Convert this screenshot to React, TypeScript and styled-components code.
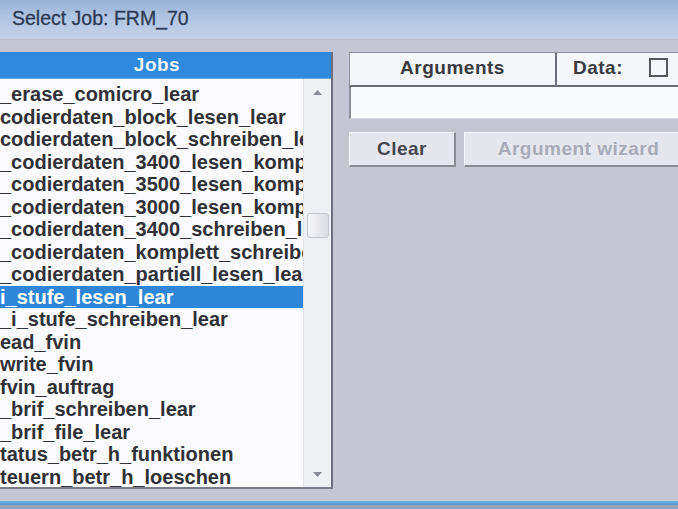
import React from "react";
import styled, { createGlobalStyle } from "styled-components";

const jobs = [
  "_erase_comicro_lear",
  "codierdaten_block_lesen_lear",
  "codierdaten_block_schreiben_lear",
  "_codierdaten_3400_lesen_komplett",
  "_codierdaten_3500_lesen_komplett",
  "_codierdaten_3000_lesen_komplett",
  "_codierdaten_3400_schreiben_lear",
  "_codierdaten_komplett_schreiben",
  "_codierdaten_partiell_lesen_lear",
  "i_stufe_lesen_lear",
  "_i_stufe_schreiben_lear",
  "ead_fvin",
  "write_fvin",
  "fvin_auftrag",
  "_brif_schreiben_lear",
  "_brif_file_lear",
  "tatus_betr_h_funktionen",
  "teuern_betr_h_loeschen",
];

const SELECTED = 9;

const GlobalStyle = createGlobalStyle`
  html, body {
    margin: 0;
    padding: 0;
    overflow: hidden;
    background: #c5c6d2;
  }
`;

const Window = styled.div`
  width: 678px;
  height: 509px;
  overflow: hidden;
  display: flex;
  flex-direction: column;
  background: #c5c6d3;
  font-family: "Liberation Sans", Arial, sans-serif;
`;

const TitleBar = styled.div`
  height: 40px;
  flex: none;
  display: flex;
  align-items: center;
  padding-left: 12px;
  padding-bottom: 2px;
  box-sizing: border-box;
  background: linear-gradient(#98b2d4 0%, #b5c9e4 55%, #c2d1e6 100%);
  color: #2c3b55;
  font-size: 19.5px;
  -webkit-text-stroke: 0.3px #2c3b55;
  border-bottom: 1px solid #bcbfcc;
`;

const Body = styled.div`
  flex: 1;
  display: flex;
  gap: 16px;
  padding-top: 12px;
  margin-left: -17px;
  min-height: 0;
`;

const JobsPanel = styled.div`
  width: 350px;
  height: 437px;
  flex: none;
  display: flex;
  flex-direction: column;
  background: #ffffff;
  border-right: 2px solid #6c6f80;
  border-bottom: 2px solid #7a7d8c;
  box-sizing: border-box;
`;

const Header = styled.div`
  height: 26px;
  flex: none;
  display: flex;
  align-items: center;
  justify-content: center;
  background: #2f89dd;
  border-bottom: 1px solid #6fa6dc;
  color: #eef4fc;
  font-weight: bold;
  font-size: 19px;
  letter-spacing: 0.5px;
`;

const ListArea = styled.div`
  flex: 1;
  display: flex;
  min-height: 0;
`;

const List = styled.div`
  flex: 1;
  padding-top: 4px;
  padding-left: 17px;
  overflow: hidden;
  background: #fbfbfd;
`;

const Row = styled.div<{ $selected?: boolean }>`
  height: 22.5px;
  line-height: 22px;
  margin-left: -17px;
  padding-left: 17px;
  white-space: nowrap;
  overflow: hidden;
  font-size: 20px;
  font-weight: bold;
  color: ${(p) => (p.$selected ? "#ffffff" : "#303137")};
  background: ${(p) => (p.$selected ? "#2f86d8" : "transparent")};
`;

const ScrollBar = styled.div`
  width: 27px;
  flex: none;
  display: flex;
  flex-direction: column;
  align-items: center;
  background: #eff0f4;
  border-left: 1px solid #e2e3ea;
`;

const Arrow = styled.div<{ $down?: boolean }>`
  height: 26px;
  width: 100%;
  display: flex;
  align-items: center;
  justify-content: center;
  margin-top: ${(p) => (p.$down ? "auto" : "0")};
`;

const Thumb = styled.div`
  width: 22px;
  height: 25px;
  margin-top: 108px;
  border: 1px solid #c3c6d2;
  border-radius: 3px;
  background: linear-gradient(90deg, #f6f6f9, #dcdde5);
  box-sizing: border-box;
`;

const RightPanel = styled.div`
  width: 345px;
  flex: none;
  display: flex;
  flex-direction: column;
`;

const ArgHeader = styled.div`
  height: 35px;
  display: flex;
  box-sizing: border-box;
  border-top: 1px solid #8f92a0;
  border-left: 1px solid #8f92a0;
  border-bottom: 2px solid #6a6d7a;
`;

const Cell = styled.div<{ $width: number; $align?: string }>`
  width: ${(p) => p.$width}px;
  flex: none;
  display: flex;
  align-items: center;
  justify-content: ${(p) => p.$align || "center"};
  gap: 26px;
  padding-left: ${(p) => (p.$align ? "16px" : "0")};
  padding-bottom: 3px;
  box-sizing: border-box;
  background: #f5f6f9;
  border-right: 2px solid #6a6d7a;
  font-size: 19px;
  font-weight: bold;
  letter-spacing: 0.5px;
  color: #3a3b42;
`;

const CheckBox = styled.div`
  width: 19px;
  height: 19px;
  box-sizing: border-box;
  border: 2px solid #55575f;
  background: #f6f7fa;
`;

const ArgInput = styled.div`
  height: 32px;
  box-sizing: border-box;
  background: #f9fafc;
  border-left: 2px solid #8a8d9a;
  border-bottom: 1px solid #d8d9e2;
`;

const ButtonRow = styled.div`
  display: flex;
  gap: 8px;
  margin-top: 13px;
`;

const Button = styled.div<{ $width: number; $disabled?: boolean }>`
  width: ${(p) => p.$width}px;
  height: 35px;
  flex: none;
  display: flex;
  align-items: center;
  justify-content: center;
  box-sizing: border-box;
  background: #e6e7ee;
  border-top: 1px solid #f4f5f8;
  border-left: 1px solid #f4f5f8;
  border-right: 2px solid #8a8c98;
  border-bottom: 2px solid #8a8c98;
  font-size: 19px;
  font-weight: bold;
  letter-spacing: 0.5px;
  color: ${(p) => (p.$disabled ? "#a9abb8" : "#45464e")};
`;

const Footer = styled.div`
  height: 11px;
  flex: none;
  display: flex;
  flex-direction: column;
  justify-content: flex-end;
`;

const BlueLine = styled.div`
  height: 4px;
  background: linear-gradient(#78b4e4, #4d96d4);
`;

const FooterBase = styled.div`
  height: 4px;
  background: #9ba1b6;
`;

const Triangle: React.FC<{ down?: boolean }> = ({ down }) => (
  <svg width="9" height="5" viewBox="0 0 9 5">
    <path d={down ? "M0 0 L9 0 L4.5 5 Z" : "M0 5 L9 5 L4.5 0 Z"} fill="#8a8c96" />
  </svg>
);

const App: React.FC = () => {
  return (
    <>
      <GlobalStyle />
      <Window>
        <TitleBar>Select Job: FRM_70</TitleBar>
        <Body>
          <JobsPanel>
            <Header>Jobs</Header>
            <ListArea>
              <List>
                {jobs.map((job, i) => (
                  <Row key={job} $selected={i === SELECTED}>
                    {job}
                  </Row>
                ))}
              </List>
              <ScrollBar>
                <Arrow>
                  <Triangle />
                </Arrow>
                <Thumb />
                <Arrow $down>
                  <Triangle down />
                </Arrow>
              </ScrollBar>
            </ListArea>
          </JobsPanel>
          <RightPanel>
            <ArgHeader>
              <Cell $width={207}>Arguments</Cell>
              <Cell $width={140} $align="flex-start">
                Data:
                <CheckBox />
              </Cell>
            </ArgHeader>
            <ArgInput />
            <ButtonRow>
              <Button $width={107}>Clear</Button>
              <Button $width={230} $disabled>
                Argument wizard
              </Button>
            </ButtonRow>
          </RightPanel>
        </Body>
        <Footer>
          <BlueLine />
          <FooterBase />
        </Footer>
      </Window>
    </>
  );
};

export default App;
